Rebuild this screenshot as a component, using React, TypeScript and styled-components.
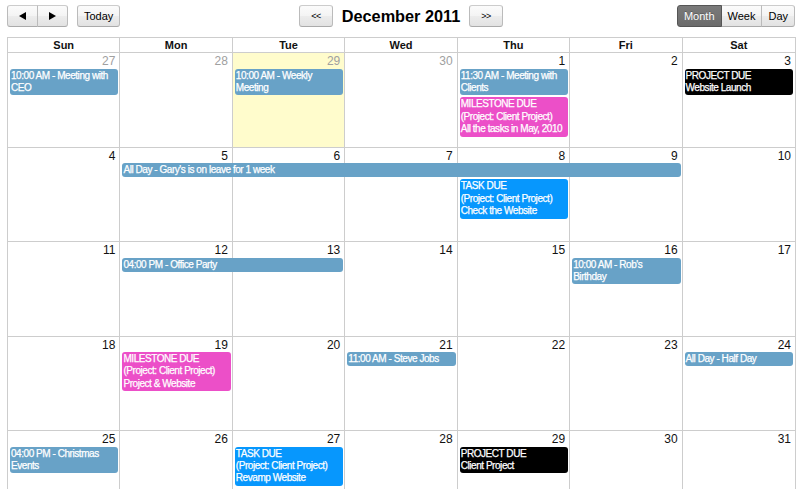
import React from "react";
import styled, { createGlobalStyle, css } from "styled-components";

const GlobalStyle = createGlobalStyle`
  html, body {
    margin: 0;
    padding: 0;
    overflow: hidden;
    background: #fff;
  }
  body {
    font-family: "Liberation Sans", Arial, Helvetica, sans-serif;
    color: #000;
  }
`;

const Page = styled.div`
  width: 800px;
  box-sizing: border-box;
  padding: 5px 4px 0 7px;
`;

const Toolbar = styled.div`
  display: grid;
  grid-template-columns: 1fr auto 1fr;
  align-items: center;
  height: 22px;
  margin-bottom: 10px;
  width: 788px;
`;

const Section = styled.div<{ $align: "left" | "center" | "right" }>`
  display: flex;
  align-items: center;
  justify-content: ${(p) =>
    p.$align === "left" ? "flex-start" : p.$align === "right" ? "flex-end" : "center"};
  gap: 9px;
`;

const Group = styled.div`
  display: flex;
`;

const Button = styled.button<{ $active?: boolean; $pos?: "first" | "mid" | "last" | "solo"; $pad?: number }>`
  height: 22px;
  box-sizing: border-box;
  margin: 0;
  padding: 0 ${(p) => p.$pad ?? 6}px;
  font-family: "Liberation Sans", Arial, sans-serif;
  font-size: 11px;
  line-height: 20px;
  color: #000;
  border: 1px solid;
  border-color: #ccc #bbb #aaa;
  background: linear-gradient(to bottom, #fbfbfb 0%, #f4f4f4 48%, #ececec 52%, #e2e2e2 100%);
  display: flex;
  align-items: center;
  justify-content: center;
  cursor: pointer;
  border-radius: ${(p) =>
    p.$pos === "first"
      ? "3px 0 0 3px"
      : p.$pos === "last"
      ? "0 3px 3px 0"
      : p.$pos === "mid"
      ? "0"
      : "3px"};
  ${(p) =>
    (p.$pos === "mid" || p.$pos === "last") &&
    css`
      margin-left: -1px;
    `}
  ${(p) =>
    p.$active &&
    css`
      background: linear-gradient(to bottom, #7a7a7a 0%, #737373 50%, #6b6b6b 100%);
      border-color: #555;
      color: #fff;
      text-shadow: 0 -1px 0 rgba(0, 0, 0, 0.25);
      position: relative;
      z-index: 1;
    `}
`;

const Chevrons = styled.span`
  font-size: 9px;
  letter-spacing: -0.5px;
`;

const Title = styled.h2`
  margin: 0;
  font-size: 16.3px;
  font-weight: bold;
  line-height: 22px;
`;

const Calendar = styled.div`
  width: 789px;
  box-sizing: border-box;
  border: 1px solid #cdcdcd;
  border-bottom: none;
`;

const HeaderRow = styled.div`
  display: grid;
  grid-template-columns: repeat(7, 1fr);
  height: 14px;
  border-bottom: 1px solid #cdcdcd;
`;

const HeadCell = styled.div`
  font-size: 11px;
  font-weight: bold;
  line-height: 14px;
  text-align: center;
  color: #111;
  border-right: 1px solid #cdcdcd;
  &:last-child {
    border-right: none;
  }
`;

const Week = styled.div`
  display: grid;
  grid-template-columns: repeat(7, 1fr);
  grid-template-rows: 15.5px auto auto 1fr;
  height: 93.5px;
  border-bottom: 1px solid #cdcdcd;
`;

const DayCell = styled.div<{ $col: number; $other?: boolean; $today?: boolean }>`
  grid-row: 1 / -1;
  grid-column: ${(p) => p.$col};
  border-right: ${(p) => (p.$col === 7 ? "none" : "1px solid #cdcdcd")};
  background: ${(p) => (p.$today ? "#fffccc" : "transparent")};
  text-align: right;
  padding: 1px 4px 0 0;
  font-size: 12px;
  line-height: 14px;
  color: ${(p) => (p.$other ? "#a0a0a0" : "#111")};
`;

const eventColors = {
  slate: "#68a2c7",
  pink: "#ec4fc8",
  blue: "#0797fd",
  black: "#000000",
};

type EventColor = keyof typeof eventColors;

const EventBox = styled.div<{ $start: number; $span: number; $lane: number; $color: EventColor }>`
  grid-column: ${(p) => p.$start} / span ${(p) => p.$span};
  grid-row: ${(p) => p.$lane + 2};
  align-self: start;
  margin: 0 2px 2px 2px;
  padding: 1px 2px 1px 1px;
  border-radius: 3px;
  background: ${(p) => eventColors[p.$color]};
  color: #fff;
  font-size: 10px;
  letter-spacing: -0.45px;
  line-height: 12.4px;
  white-space: nowrap;
  overflow: hidden;
  -webkit-text-stroke: 0.25px #fff;
`;

const Line = styled.span`
  display: block;
`;

type Day = { n: number; other?: boolean; today?: boolean };
type Ev = { start: number; span?: number; lane?: number; color: EventColor; lines: string[] };
type WeekData = { days: Day[]; events: Ev[] };

const d = (n: number, other = false, today = false): Day => ({ n, other, today });

const weeks: WeekData[] = [
  {
    days: [d(27, true), d(28, true), d(29, true, true), d(30, true), d(1), d(2), d(3)],
    events: [
      { start: 1, color: "slate", lines: ["10:00 AM - Meeting with", "CEO"] },
      { start: 3, color: "slate", lines: ["10:00 AM - Weekly", "Meeting"] },
      { start: 5, color: "slate", lines: ["11:30 AM - Meeting with", "Clients"] },
      {
        start: 5,
        lane: 1,
        color: "pink",
        lines: ["MILESTONE DUE", "(Project: Client Project)", "All the tasks in May, 2010"],
      },
      { start: 7, color: "black", lines: ["PROJECT DUE", "Website Launch"] },
    ],
  },
  {
    days: [d(4), d(5), d(6), d(7), d(8), d(9), d(10)],
    events: [
      { start: 2, span: 5, color: "slate", lines: ["All Day - Gary's is on leave for 1 week"] },
      {
        start: 5,
        lane: 1,
        color: "blue",
        lines: ["TASK DUE", "(Project: Client Project)", "Check the Website"],
      },
    ],
  },
  {
    days: [d(11), d(12), d(13), d(14), d(15), d(16), d(17)],
    events: [
      { start: 2, span: 2, color: "slate", lines: ["04:00 PM - Office Party"] },
      { start: 6, color: "slate", lines: ["10:00 AM - Rob's", "Birthday"] },
    ],
  },
  {
    days: [d(18), d(19), d(20), d(21), d(22), d(23), d(24)],
    events: [
      {
        start: 2,
        color: "pink",
        lines: ["MILESTONE DUE", "(Project: Client Project)", "Project & Website"],
      },
      { start: 4, color: "slate", lines: ["11:00 AM - Steve Jobs"] },
      { start: 7, color: "slate", lines: ["All Day - Half Day"] },
    ],
  },
  {
    days: [d(25), d(26), d(27), d(28), d(29), d(30), d(31)],
    events: [
      { start: 1, color: "slate", lines: ["04:00 PM - Christmas", "Events"] },
      {
        start: 3,
        color: "blue",
        lines: ["TASK DUE", "(Project: Client Project)", "Revamp Website"],
      },
      { start: 5, color: "black", lines: ["PROJECT DUE", "Client Project"] },
    ],
  },
];

const dayNames = ["Sun", "Mon", "Tue", "Wed", "Thu", "Fri", "Sat"];

const Triangle = ({ dir }: { dir: "left" | "right" }) => (
  <svg width="7" height="8" viewBox="0 0 7 8" aria-hidden="true">
    {dir === "left" ? <polygon points="7,0 7,8 0,4" fill="#000" /> : <polygon points="0,0 0,8 7,4" fill="#000" />}
  </svg>
);

export default function App() {
  return (
    <>
      <GlobalStyle />
      <Page>
        <Toolbar>
          <Section $align="left">
            <Group>
              <Button $pos="first" $pad={11} aria-label="previous">
                <Triangle dir="left" />
              </Button>
              <Button $pos="last" $pad={11} aria-label="next">
                <Triangle dir="right" />
              </Button>
            </Group>
            <Button $pos="solo">Today</Button>
          </Section>
          <Section $align="center">
            <Button $pos="solo" $pad={11}>
              <Chevrons>&lt;&lt;</Chevrons>
            </Button>
            <Title>December 2011</Title>
            <Button $pos="solo" $pad={11}>
              <Chevrons>&gt;&gt;</Chevrons>
            </Button>
          </Section>
          <Section $align="right">
            <Group>
              <Button $pos="first" $active>
                Month
              </Button>
              <Button $pos="mid">Week</Button>
              <Button $pos="last">Day</Button>
            </Group>
          </Section>
        </Toolbar>
        <Calendar>
          <HeaderRow>
            {dayNames.map((n) => (
              <HeadCell key={n}>{n}</HeadCell>
            ))}
          </HeaderRow>
          {weeks.map((w, wi) => (
            <Week key={wi}>
              {w.days.map((day, i) => (
                <DayCell key={i} $col={i + 1} $other={day.other} $today={day.today}>
                  {day.n}
                </DayCell>
              ))}
              {w.events.map((e, ei) => (
                <EventBox key={ei} $start={e.start} $span={e.span ?? 1} $lane={e.lane ?? 0} $color={e.color}>
                  {e.lines.map((l, li) => (
                    <Line key={li}>{l}</Line>
                  ))}
                </EventBox>
              ))}
            </Week>
          ))}
        </Calendar>
      </Page>
    </>
  );
}
